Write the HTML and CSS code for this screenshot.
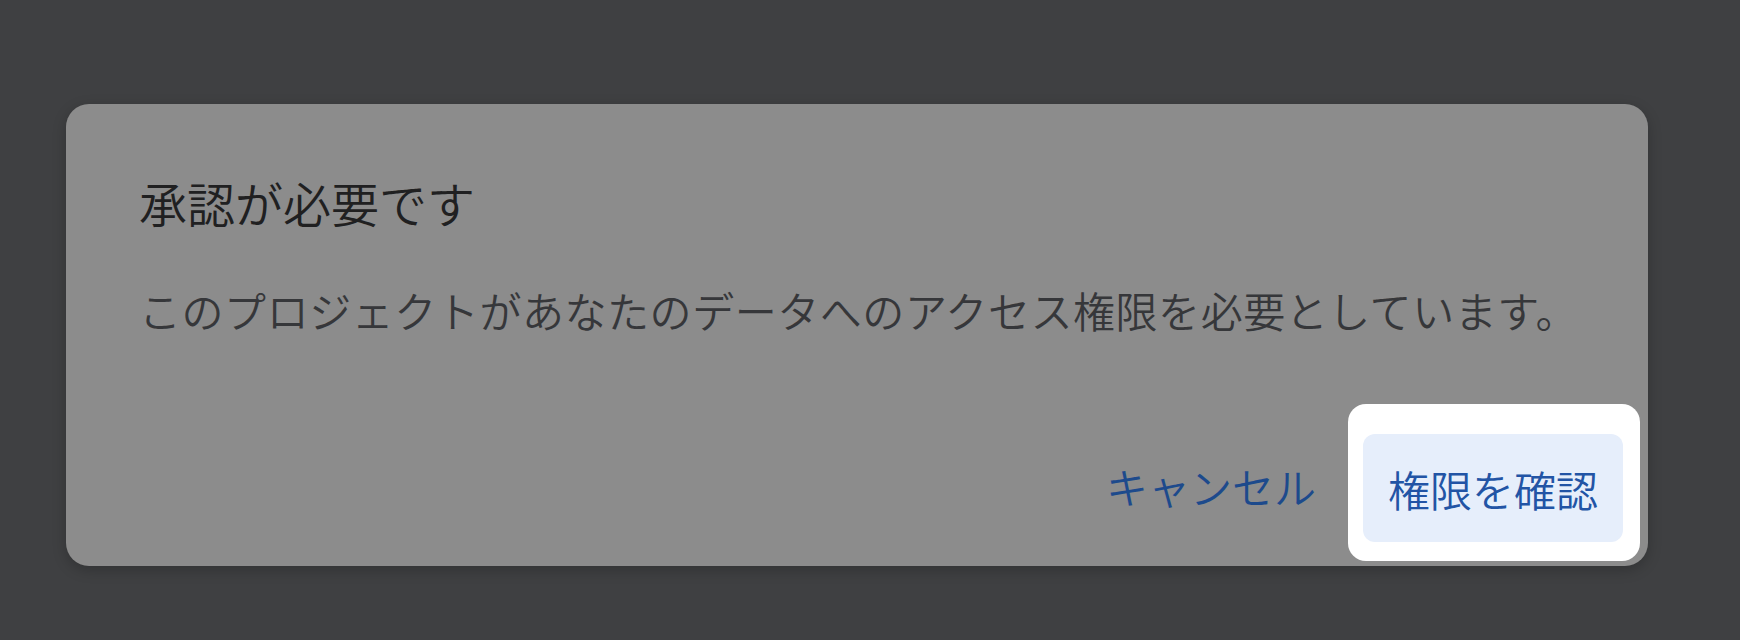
FILE: index.html
```html
<!DOCTYPE html>
<html lang="ja">
<head>
<meta charset="utf-8">
<title>承認が必要です</title>
<link rel="stylesheet" href="styles.css">
</head>
<body>
  <div class="dialog">
    <div class="content">
      <h1 class="title">承認が必要です</h1>
      <p class="message">このプロジェクトがあなたのデータへのアクセス権限を必要としています。</p>
    </div>
    <div class="actions">
      <button class="btn-text" type="button">キャンセル</button>
      <div class="spotlight">
        <button class="btn-primary" type="button">権限を確認</button>
      </div>
    </div>
  </div>
</body>
</html>
```

FILE: styles.css
```css
html, body {
  margin: 0;
  height: 100%;
}
body {
  background: #3f4042;
  padding: 104px 92px 0 66px;
  box-sizing: border-box;
  font-family: "Noto Sans CJK JP", "Noto Sans", sans-serif;
  font-weight: 350;
}
.dialog {
  background: #8c8c8c;
  border-radius: 23px;
  box-shadow: 0 4px 14px rgba(0, 0, 0, 0.22);
  display: flex;
  flex-direction: column;
}
.content {
  padding: 66px 72px 0 73px;
}
.title {
  margin: 0;
  font-size: 48px;
  line-height: 64px;
  font-weight: 350;
  color: #202021;
}
.message {
  margin: 48px 0 0;
  font-size: 42px;
  line-height: 56px;
  letter-spacing: 0.55px;
  color: #36373a;
  white-space: nowrap;
}
.actions {
  margin-top: 66px;
  padding: 0 8px 5px 0;
  display: flex;
  justify-content: flex-end;
  align-items: flex-end;
}
.btn-text {
  border: 0;
  background: none;
  font-family: inherit;
  font-weight: 350;
  font-size: 42px;
  line-height: 56px;
  color: #1d4a8c;
  padding: 0;
  margin: 0 32px 47px 0;
}
.spotlight {
  background: #ffffff;
  border-radius: 18px;
  padding: 30px 17px 19px 15px;
}
.btn-primary {
  border: 0;
  background: #e6eefb;
  border-radius: 12px;
  width: 260px;
  height: 108px;
  padding: 0;
  font-family: inherit;
  font-weight: 350;
  font-size: 42px;
  color: #2254a5;
  display: flex;
  align-items: center;
  justify-content: center;
}
```
